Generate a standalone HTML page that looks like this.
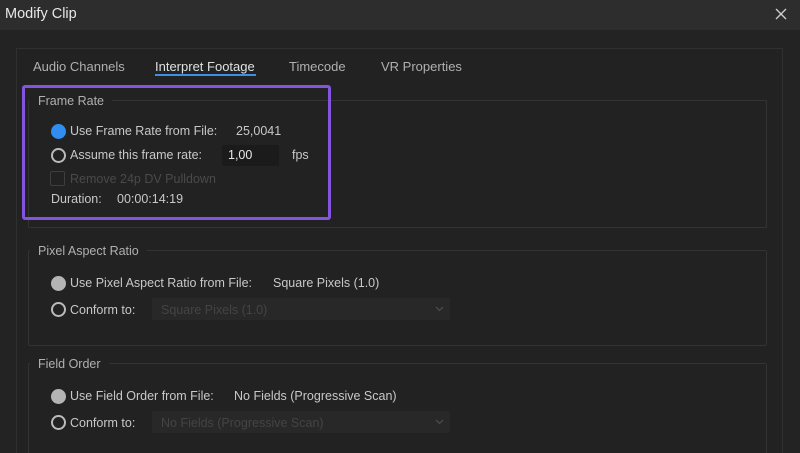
<!DOCTYPE html>
<html style="overflow:hidden;width:800px;height:453px"><head><style>
*{margin:0;padding:0;box-sizing:border-box}
body{width:800px;height:453px;background:#232323;font-family:"Liberation Sans",sans-serif;color:#c8c8c8;position:relative;overflow:hidden;font-size:12.5px}
.a{position:absolute;white-space:nowrap}
.title{position:absolute;left:0;top:0;width:800px;height:30px;background:#2d2d2d}
.panel{position:absolute;left:16px;top:48px;width:767px;height:405px;border:1px solid #303030;border-bottom:none;background:#222}
.grp{position:absolute;left:28px;width:739px;border:1px solid #333;border-radius:2px}
.gl{position:absolute;background:#222;padding:0 8px;color:#b0b0b0;font-size:12.5px}
.rad{position:absolute;width:15px;height:15px;border-radius:50%}
.sel{position:absolute;height:22px;background:#282828;border-radius:2px}
</style></head><body>
<div class="title"></div>
<div class="a" style="left:5px;top:6px;font-size:14.5px;color:#e8e8e8">Modify Clip</div>
<svg class="a" style="left:775px;top:8px" width="12" height="12"><path d="M1 1L11 11M11 1L1 11" stroke="#d0d0d0" stroke-width="1.3"/></svg>
<div class="panel"></div>
<div class="a" style="left:33px;top:59px;color:#b0b0b0;font-size:13px">Audio Channels</div>
<div class="a" style="left:155px;top:59px;color:#e0e0e0;font-size:13px">Interpret Footage</div>
<div class="a" style="left:155px;top:74px;width:101px;height:2px;background:#3c8ee8"></div>
<div class="a" style="left:289px;top:59px;color:#b0b0b0;font-size:13px">Timecode</div>
<div class="a" style="left:381px;top:59px;color:#b0b0b0;font-size:13px">VR Properties</div>

<div class="grp" style="top:100px;height:128px"></div>
<div class="gl" style="left:30px;top:94px">Frame Rate</div>
<div class="rad" style="left:51px;top:124px;background:#2f8ef0"></div>
<div class="a" style="left:70px;top:124px">Use Frame Rate from File:</div>
<div class="a" style="left:236px;top:124px">25,0041</div>
<div class="rad" style="left:51px;top:148px;border:2px solid #bbb"></div>
<div class="a" style="left:70px;top:148px">Assume this frame rate:</div>
<div class="a" style="left:222px;top:145px;width:57px;height:21px;background:#1b1b1b;border-radius:2px"></div>
<div class="a" style="left:228px;top:148px;color:#e8e8e8">1,00</div>
<div class="a" style="left:292px;top:148px">fps</div>
<div class="a" style="left:50px;top:171px;width:15px;height:15px;border:1px solid #3e3e3e;border-radius:2px"></div>
<div class="a" style="left:70px;top:172px;color:#4a4a4a">Remove 24p DV Pulldown</div>
<div class="a" style="left:51px;top:192px">Duration:</div>
<div class="a" style="left:117px;top:192px">00:00:14:19</div>
<div class="a" style="left:22px;top:85px;width:309px;height:135px;border:3px solid #8355de;border-radius:3px"></div>

<div class="grp" style="top:250px;height:96px"></div>
<div class="gl" style="left:30px;top:244px">Pixel Aspect Ratio</div>
<div class="rad" style="left:51px;top:276px;background:#b4b4b4"></div>
<div class="a" style="left:70px;top:276px">Use Pixel Aspect Ratio from File:</div>
<div class="a" style="left:273px;top:276px">Square Pixels (1.0)</div>
<div class="rad" style="left:51px;top:302px;border:2px solid #bbb"></div>
<div class="a" style="left:70px;top:303px">Conform to:</div>
<div class="sel" style="left:152px;top:298px;width:298px"></div>
<div class="a" style="left:161px;top:303px;color:#444">Square Pixels (1.0)</div>
<svg class="a" style="left:435px;top:306px" width="9" height="6"><path d="M1 1L4.5 4.5L8 1" stroke="#4a4a4a" fill="none" stroke-width="1.3"/></svg>

<div class="grp" style="top:363px;height:100px"></div>
<div class="gl" style="left:30px;top:357px">Field Order</div>
<div class="rad" style="left:51px;top:389px;background:#b4b4b4"></div>
<div class="a" style="left:70px;top:389px">Use Field Order from File:</div>
<div class="a" style="left:234px;top:389px">No Fields (Progressive Scan)</div>
<div class="rad" style="left:51px;top:415px;border:2px solid #bbb"></div>
<div class="a" style="left:70px;top:416px">Conform to:</div>
<div class="sel" style="left:152px;top:411px;width:298px"></div>
<div class="a" style="left:161px;top:416px;color:#444">No Fields (Progressive Scan)</div>
<svg class="a" style="left:435px;top:419px" width="9" height="6"><path d="M1 1L4.5 4.5L8 1" stroke="#4a4a4a" fill="none" stroke-width="1.3"/></svg>
</body></html>
